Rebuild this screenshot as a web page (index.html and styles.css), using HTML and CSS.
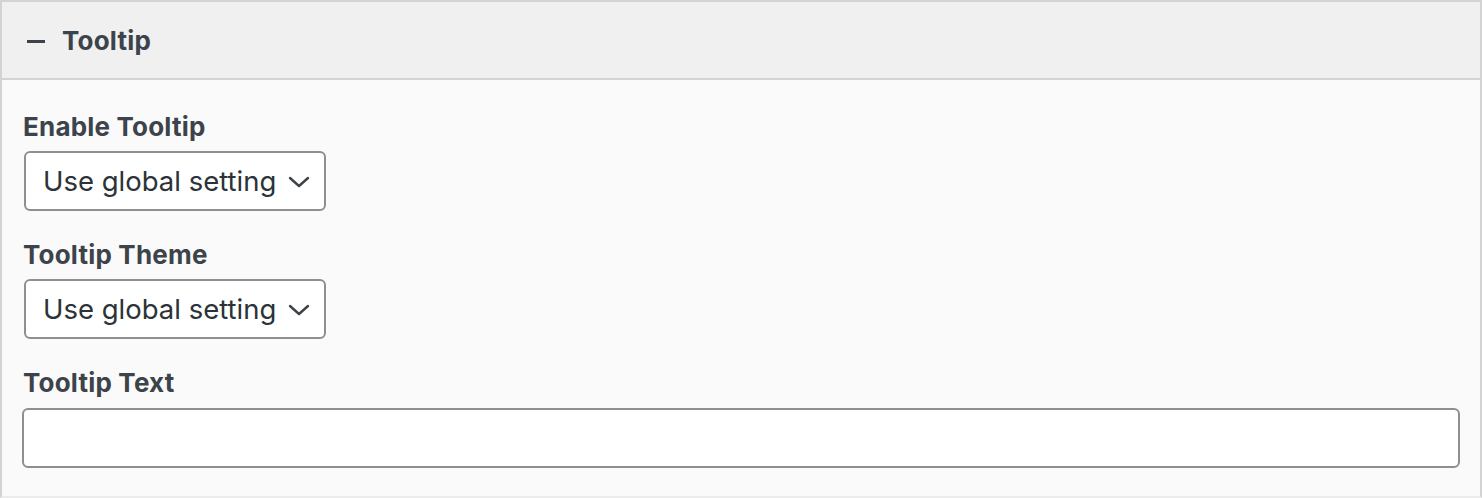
FILE: index.html
```html
<!DOCTYPE html>
<html>
<head>
<meta charset="utf-8">
<link rel="stylesheet" href="styles.css">
</head>
<body>
<div class="panel">
  <div class="panel-header">
    <span class="toggle"></span>
    <span class="title">Tooltip</span>
  </div>
  <div class="panel-body">
    <div class="field">
      <label class="label">Enable Tooltip</label>
      <div class="select">
        <span>Use global setting</span>
        <svg class="chev" width="22" height="12" viewBox="0 0 22 12"><path d="M2 2 L11 10 L20 2" fill="none" stroke="#3c434a" stroke-width="2.4" stroke-linecap="round" stroke-linejoin="round"/></svg>
      </div>
    </div>
    <div class="field">
      <label class="label">Tooltip Theme</label>
      <div class="select">
        <span>Use global setting</span>
        <svg class="chev" width="22" height="12" viewBox="0 0 22 12"><path d="M2 2 L11 10 L20 2" fill="none" stroke="#3c434a" stroke-width="2.4" stroke-linecap="round" stroke-linejoin="round"/></svg>
      </div>
    </div>
    <div class="field">
      <label class="label">Tooltip Text</label>
      <div class="text-input"></div>
    </div>
  </div>
</div>
</body>
</html>
```
FILE: styles.css
```css
html, body {
  margin: 0;
  padding: 0;
  background: #fafafa;
}
body {
  font-family: Inter, "Noto Sans", sans-serif;
  color: #3c434a;
}
.panel {
  border: 2px solid #d3d3d3;
  border-bottom: 2px solid #ececec;
  background: #fafafa;
  width: 1478px;
  height: 494px;
}
.panel-header {
  height: 76px;
  background: #f0f0f0;
  border-bottom: 2px solid #d3d3d3;
  display: flex;
  align-items: center;
  padding-left: 25px;
}
.toggle {
  width: 18px;
  height: 3px;
  background: #3c434a;
  margin-right: 17px;
  margin-top: 2px;
}
.title {
  font-size: 26px;
  font-weight: 700;
  letter-spacing: 0.2px;
}
.panel-body {
  padding: 31px 20px 0 20px;
  display: flex;
  flex-direction: column;
  gap: 28px;
}
.field {
  display: flex;
  flex-direction: column;
  gap: 8px;
}
.label {
  font-size: 26px;
  font-weight: 700;
  line-height: 32px;
  padding-left: 1px;
  letter-spacing: 0.2px;
}
.select {
  box-sizing: border-box;
  width: 302px;
  height: 60px;
  margin-left: 2px;
  border: 2px solid #8c8f94;
  border-radius: 6px;
  background: #fff;
  display: flex;
  align-items: center;
  padding-left: 17px;
  font-size: 27.5px;
  color: #2c3338;
}
.chev {
  margin-left: 12px;
  margin-top: 2px;
}
.text-input {
  box-sizing: border-box;
  width: 1438px;
  height: 60px;
  margin-top: 1px;
  border: 2px solid #8c8f94;
  border-radius: 6px;
  background: #fff;
}
```
